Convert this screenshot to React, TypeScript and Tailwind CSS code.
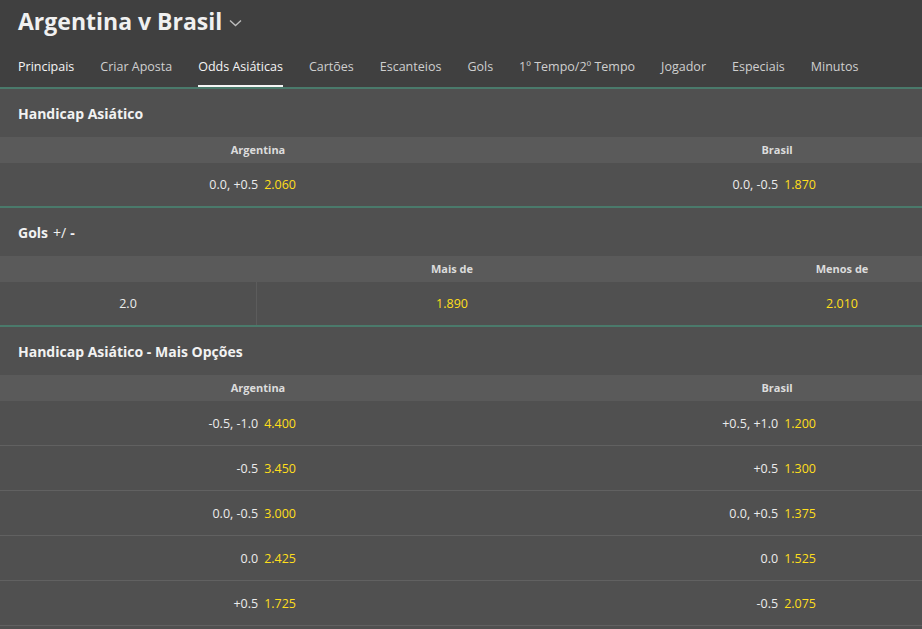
import React from 'react'

const tabs = ['Principais', 'Criar Aposta', 'Odds Asiáticas', 'Cartões', 'Escanteios', 'Gols', '1º Tempo/2º Tempo', 'Jogador', 'Especiais', 'Minutos']

const maisOpcoes = [
  { a: '-0.5, -1.0', ao: '4.400', b: '+0.5, +1.0', bo: '1.200' },
  { a: '-0.5', ao: '3.450', b: '+0.5', bo: '1.300' },
  { a: '0.0, -0.5', ao: '3.000', b: '0.0, +0.5', bo: '1.375' },
  { a: '0.0', ao: '2.425', b: '0.0', bo: '1.525' },
  { a: '+0.5', ao: '1.725', b: '-0.5', bo: '2.075' },
]

const SectionTitle = ({ children }: { children: React.ReactNode }) => (
  <div className="h-[48px] flex items-center px-[18px] text-[14px] font-bold text-[#f2f2f2]">{children}</div>
)

const TeamHeader = () => (
  <div className="h-[26px] bg-[#5a5a5a] flex items-center text-[11px] font-bold text-[#dcdcdc]">
    <div className="w-[516px] text-center">Argentina</div>
    <div className="flex-1 pl-[116px] text-center">Brasil</div>
  </div>
)

const OddsRow = ({ a, ao, b, bo }: { a: string; ao: string; b: string; bo: string }) => (
  <div className="h-[45px] flex items-center pt-[3px] text-[12.5px] border-b border-[#616161]">
    <div className="w-[296px] text-right">
      <span className="text-[#ececec]">{a}</span>
      <span className="text-[#ffdf1b] ml-[6px]">{ao}</span>
    </div>
    <div className="w-[520px] text-right">
      <span className="text-[#ececec]">{b}</span>
      <span className="text-[#ffdf1b] ml-[6px]">{bo}</span>
    </div>
  </div>
)

export default function App() {
  return (
    <div className="w-[922px] h-[629px] overflow-hidden bg-[#505050]" style={{ fontFamily: '"Open Sans", "Noto Sans", sans-serif' }}>
      {/* top bar */}
      <div className="bg-[#404040] h-[87px] flex flex-col">
        <div className="h-[42px] flex items-center px-[18px] gap-[7px]">
          <span className="text-[23px] font-bold text-[#f0f0f0]">Argentina v Brasil</span>
          <svg width="13" height="8" viewBox="0 0 13 8" className="mt-[3px]">
            <path d="M1 1.5 L6.5 6.5 L12 1.5" fill="none" stroke="#bdbdbd" strokeWidth="1.4" />
          </svg>
        </div>
        <div className="flex-1 flex items-stretch px-[18px] gap-[26px]">
          {tabs.map((t, i) => (
            <div
              key={t}
              className={`flex items-center text-[12.5px] border-b-2 ${i === 2 ? 'border-[#f5f5f5] text-[#f5f5f5]' : 'border-transparent'} ${i === 0 ? 'text-[#f5f5f5]' : i === 2 ? '' : 'text-[#cfcfcf]'}`}
            >
              <span className="pt-[7px]">{t}</span>
            </div>
          ))}
        </div>
      </div>
      <div className="h-[2px] bg-[#4a7a6b]" />

      {/* Handicap Asiatico */}
      <SectionTitle>Handicap Asiático</SectionTitle>
      <TeamHeader />
      <div className="h-[43px] flex items-center pt-[1px] text-[12.5px]">
        <div className="w-[296px] text-right">
          <span className="text-[#ececec]">0.0, +0.5</span>
          <span className="text-[#ffdf1b] ml-[6px]">2.060</span>
        </div>
        <div className="w-[520px] text-right">
          <span className="text-[#ececec]">0.0, -0.5</span>
          <span className="text-[#ffdf1b] ml-[6px]">1.870</span>
        </div>
      </div>
      <div className="h-[2px] bg-[#4a7a6b]" />

      {/* Gols +/- */}
      <SectionTitle>
        Gols<span className="font-normal ml-[5px]">+/</span>
        <span className="ml-[4px]">-</span>
      </SectionTitle>
      <div className="h-[26px] bg-[#5a5a5a] flex items-center text-[11px] font-bold text-[#dcdcdc]">
        <div className="w-[257px]" />
        <div className="w-[390px] text-center">Mais de</div>
        <div className="w-[115px]" />
        <div className="w-[160px] text-center">Menos de</div>
      </div>
      <div className="h-[43px] flex items-stretch text-[12.5px]">
        <div className="w-[257px] border-r border-[#5c5c5c] flex items-center justify-center pt-[1px] text-[#ececec]">2.0</div>
        <div className="w-[390px] flex items-center justify-center pt-[1px] text-[#ffdf1b]">1.890</div>
        <div className="w-[115px]" />
        <div className="w-[160px] flex items-center justify-center pt-[1px] text-[#ffdf1b]">2.010</div>
      </div>
      <div className="h-[2px] bg-[#4a7a6b]" />

      {/* Handicap Asiatico - Mais Opcoes */}
      <SectionTitle>Handicap Asiático - Mais Opções</SectionTitle>
      <TeamHeader />
      {maisOpcoes.map((r, i) => (
        <OddsRow key={i} {...r} />
      ))}
    </div>
  )
}
